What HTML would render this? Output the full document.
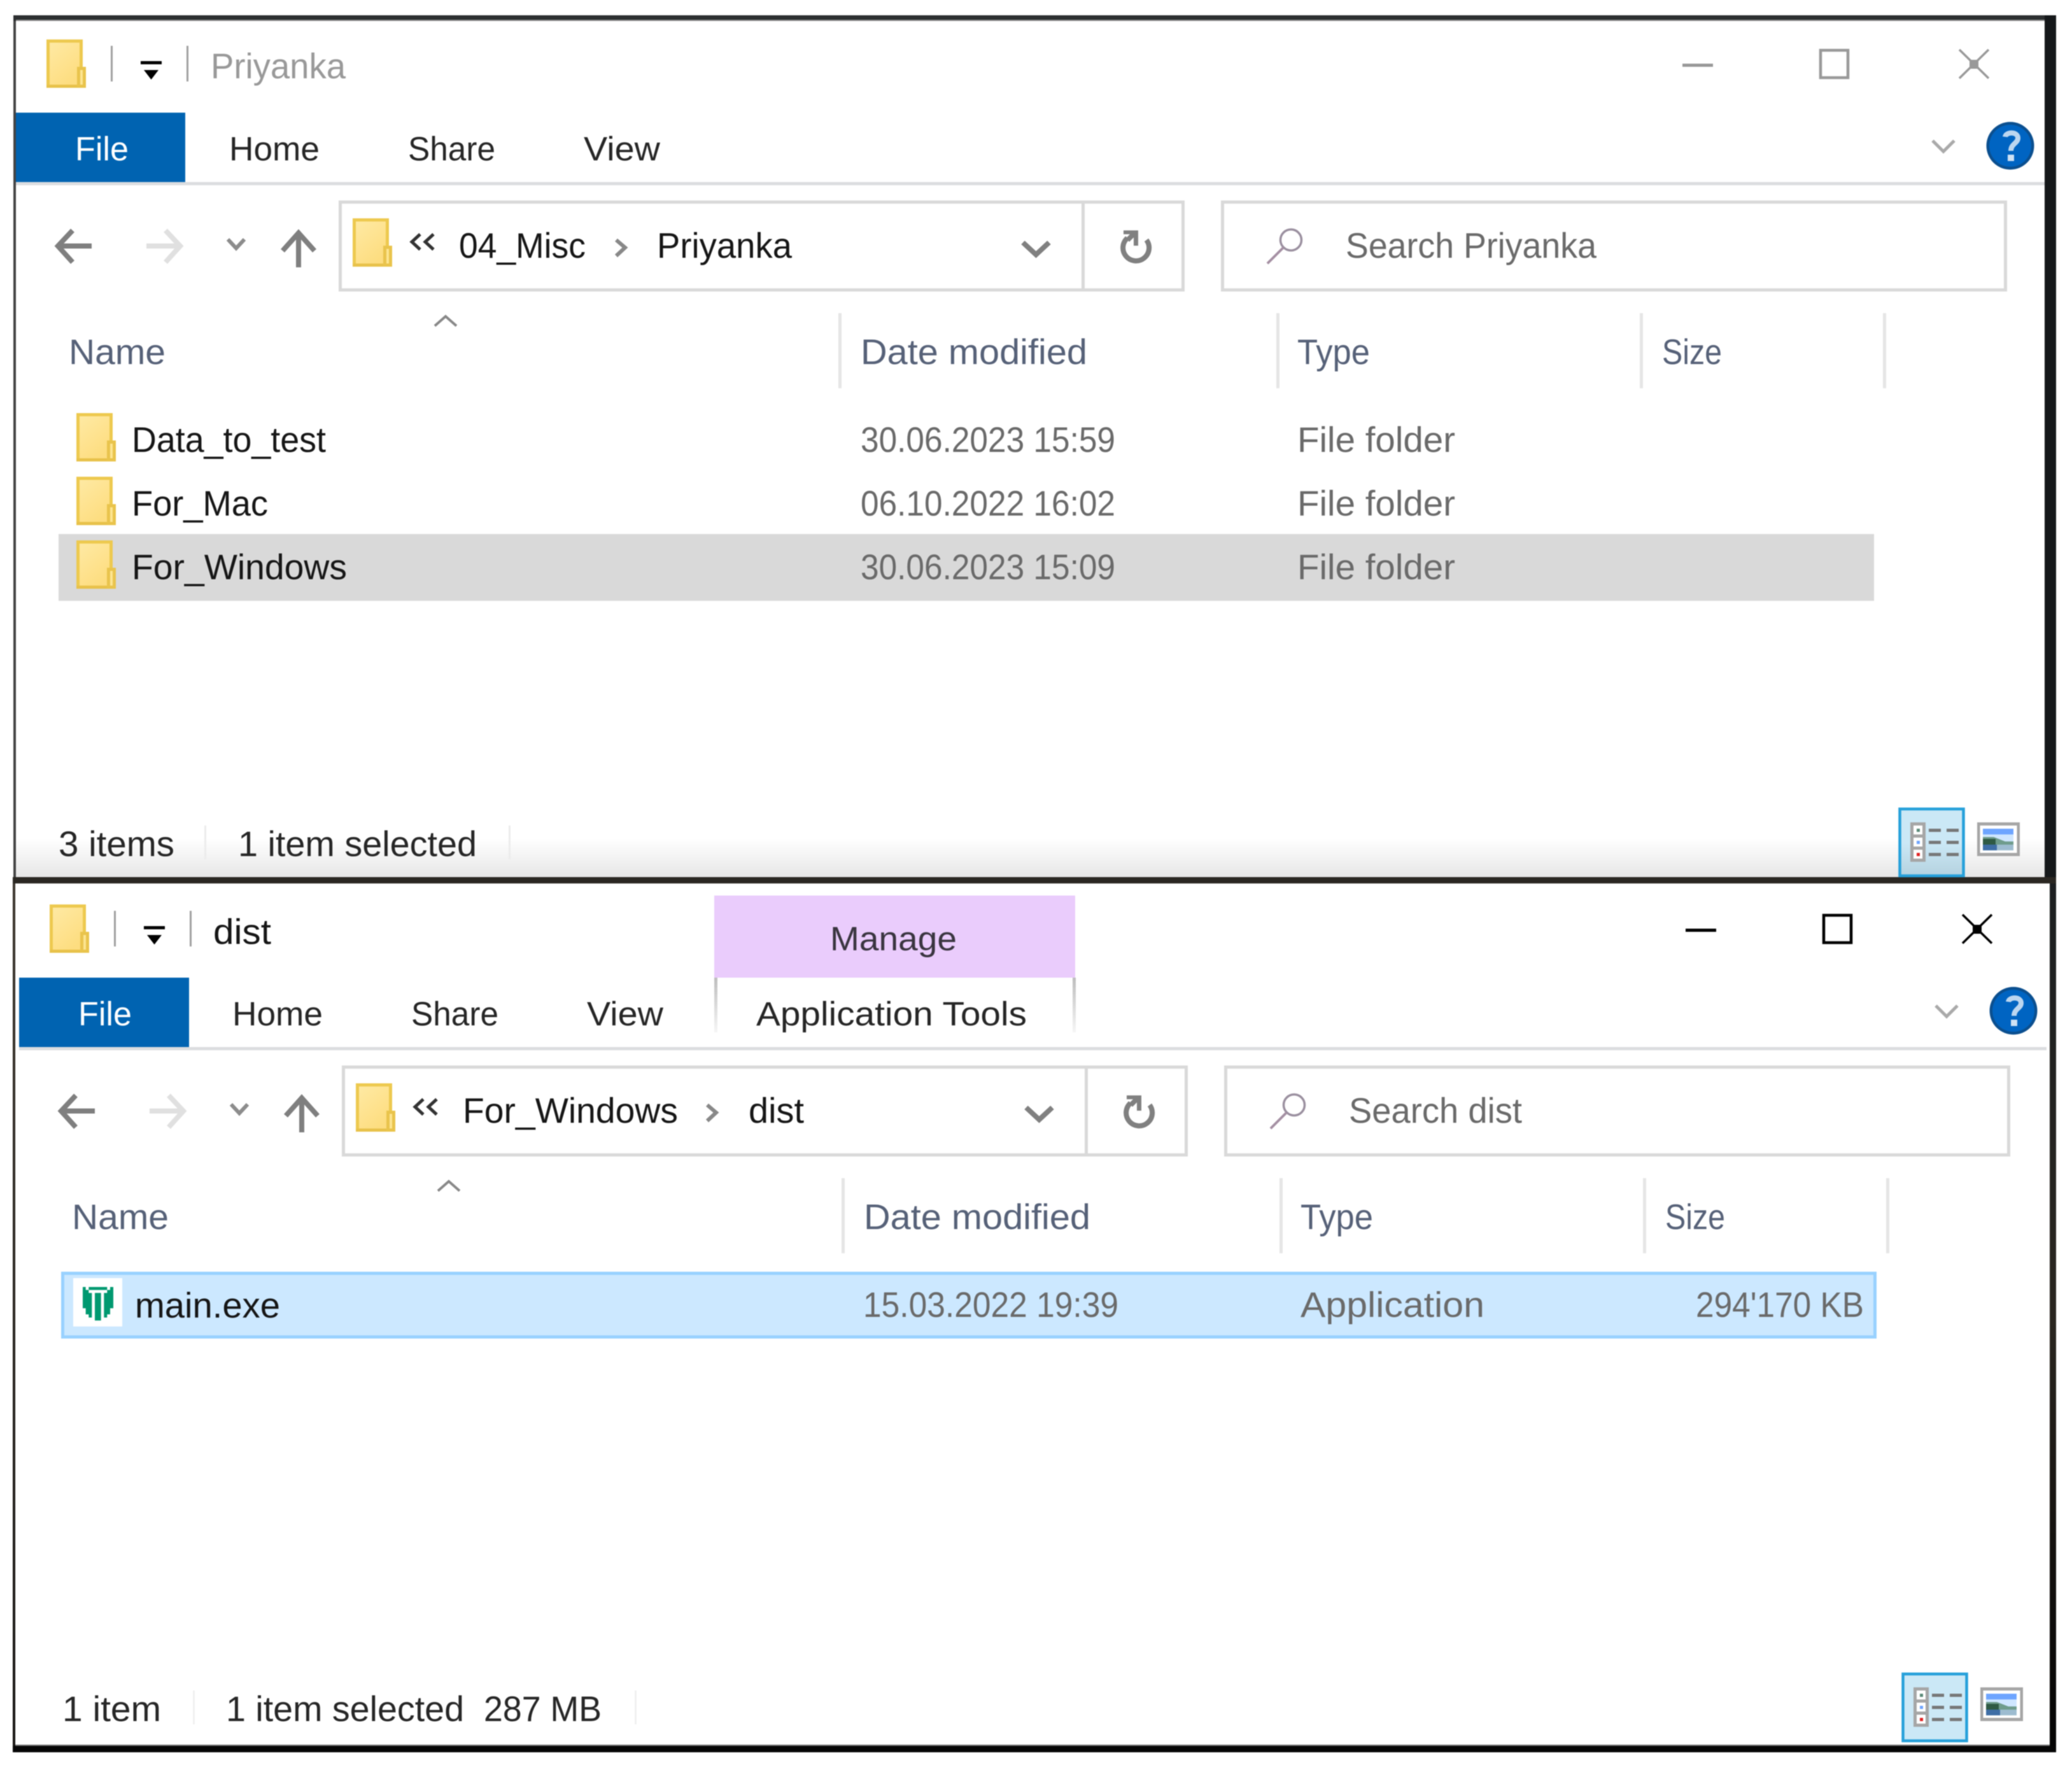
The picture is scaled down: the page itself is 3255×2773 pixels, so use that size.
<!DOCTYPE html>
<html><head><meta charset="utf-8"><title>Explorer</title>
<style>
html,body{margin:0;padding:0;background:#fff}
svg{display:block;filter:blur(.7px)}
text{font-family:"Liberation Sans",sans-serif;font-size:56px;fill:#161616}
.r{font-size:53px;fill:#262626}
.g{fill:#6a6a6a}
.h{fill:#566178}
.s{fill:#262626}
.ln{fill:none;stroke-linejoin:miter}
</style></head><body>
<svg xmlns="http://www.w3.org/2000/svg" width="3255" height="2773" viewBox="0 0 3255 2773">
<defs>
<linearGradient id="fg" x1="0" y1="0" x2=".6" y2="1"><stop offset="0" stop-color="#fee9a3"/><stop offset="1" stop-color="#fddd80"/></linearGradient>
<linearGradient id="st" x1="0" y1="0" x2="0" y2="1"><stop offset="0" stop-color="#fff"/><stop offset="1" stop-color="#e6e6e6"/></linearGradient>
<linearGradient id="btn" x1="0" y1="0" x2="0" y2="1"><stop offset="0" stop-color="#cbe8f6"/><stop offset=".5" stop-color="#cbe8f6"/><stop offset="1" stop-color="#b5d2df"/></linearGradient>
<linearGradient id="sep" x1="0" y1="0" x2="0" y2="1"><stop offset="0" stop-color="#bdbdbd"/><stop offset="1" stop-color="#f6f6f6"/></linearGradient>
<linearGradient id="rb" x1="0" y1="0" x2="0" y2="1"><stop offset="0" stop-color="#1c1f21"/><stop offset=".5" stop-color="#2a2620"/><stop offset=".75" stop-color="#15120f"/><stop offset="1" stop-color="#040404"/></linearGradient>
<linearGradient id="lb" x1="0" y1="0" x2="0" y2="1"><stop offset="0" stop-color="#3a342c"/><stop offset="1" stop-color="#141210"/></linearGradient>
<g id="folder">
<path d="M0 0H57V43H62V76H0Z" fill="#edc94f"/>
<rect x="5" y="5" width="47" height="66" fill="url(#fg)"/>
<rect x="48" y="43" width="14" height="33" fill="#e9c44c"/>
<rect x="53" y="48" width="4" height="23" fill="#fde590"/>
<rect x="0" y="71" width="48" height="5" fill="#e8c24b"/>
</g>
<g id="nav">
<path class="ln" d="M144 386.500H94M114 362L91 386.500L114 412" stroke="#7f7f7f" stroke-width="8"/>
<path class="ln" d="M230 386.500H280M260 362L283 386.500L260 412" stroke="#e0e0e0" stroke-width="8"/>
<path class="ln" d="M358 376L371 390L384 376" stroke="#8c8c8c" stroke-width="6"/>
<path class="ln" d="M469 420V368M444 394L469 366L494 394" stroke="#7f7f7f" stroke-width="8"/>
<rect x="534.500" y="317.500" width="1324" height="138" fill="none" stroke="#d9d9d9" stroke-width="5"/>
<rect x="1699" y="315" width="5" height="143" fill="#d9d9d9"/>
<rect x="1920.500" y="317.500" width="1230" height="138" fill="none" stroke="#d9d9d9" stroke-width="5"/>
<use href="#folder" x="554" y="343"/>
<path class="ln" d="M660 368L647 380L660 392M681 368L668 380L681 392" stroke="#333" stroke-width="5"/>
<path class="ln" d="M1607 381L1627.500 400L1648 381" stroke="#808080" stroke-width="8"/>
<path class="ln" d="M1801 377A20.500 20.500 0 1 1 1771 374" stroke="#808080" stroke-width="8"/>
<path d="M1765 362H1788V386H1781V373L1774 380L1769 374L1775 368H1765Z" fill="#808080"/>
<circle cx="2028" cy="377" r="16.500" fill="none" stroke="#9a8f9f" stroke-width="3.500"/>
<path d="M2016 389L1991 414" stroke="#a58fa3" stroke-width="4"/>
<path class="ln" d="M683 512L700 497L717 512" stroke="#888" stroke-width="4"/>
<rect x="1317" y="492" width="5" height="118" fill="#e6e6e6"/>
<rect x="2005" y="492" width="5" height="118" fill="#e6e6e6"/>
<rect x="2576" y="492" width="5" height="118" fill="#e6e6e6"/>
<rect x="2958" y="492" width="5" height="118" fill="#e6e6e6"/>
<path class="ln" d="M3036 221L3053 238L3070 221" stroke="#aaa" stroke-width="5"/>
<circle cx="3158" cy="229" r="37.500" fill="#0b4f8f"/>
<circle cx="3158" cy="229" r="33" fill="#0064c2"/>
<path class="ln" d="M3150 215C3151 207 3170 206 3170 217C3170 225 3159 226 3159 237" stroke="#bcd6f0" stroke-width="8"/>
<rect x="3154" y="243" width="10" height="10" fill="#cfe2f5"/>
</g>
<g id="views">
<rect x="2984.500" y="1271" width="100" height="105" fill="url(#btn)" stroke="#26a0da" stroke-width="4.500"/>
<rect x="3001" y="1292" width="24" height="62" fill="#a6a6a6"/>
<rect x="3006" y="1297" width="14" height="14" fill="#fff"/><rect x="3006" y="1316" width="14" height="14" fill="#fff"/><rect x="3006" y="1335" width="14" height="14" fill="#fff"/>
<rect x="3011" y="1302" width="5" height="5" fill="#5a8a78"/><rect x="3011" y="1321" width="5" height="5" fill="#6ea5ff"/><rect x="3011" y="1340" width="5" height="5" fill="#e02020"/>
<rect x="3030" y="1302" width="19" height="5" fill="#777"/><rect x="3058" y="1302" width="19" height="5" fill="#777"/>
<rect x="3030" y="1321" width="19" height="5" fill="#777"/><rect x="3058" y="1321" width="19" height="5" fill="#777"/>
<rect x="3030" y="1340" width="19" height="5" fill="#777"/><rect x="3058" y="1340" width="19" height="5" fill="#777"/>
<rect x="3106" y="1292" width="67" height="53" fill="#a6a6a6"/>
<rect x="3110.500" y="1297" width="58" height="43" fill="#fff"/>
<rect x="3115" y="1302" width="48" height="34" fill="#cfe6ff"/>
<rect x="3115" y="1302" width="48" height="9" fill="#6ea5ff"/>
<path d="M3115 1315H3132L3150 1322H3163V1329H3115Z" fill="#6f9c8c"/>
<rect x="3115" y="1318" width="20" height="9" fill="#2f5a44"/>
<path d="M3115 1327H3163V1336H3115Z" fill="#9dbcd0"/>
<rect x="3115" y="1327" width="22" height="9" fill="#3f6ea6"/>
</g>
</defs>

<!-- window frames -->
<rect x="21" y="24" width="4" height="1364" fill="#444"/>
<rect x="20" y="1388" width="4" height="1365" fill="url(#lb)"/>
<rect x="21" y="24" width="3209" height="9" fill="#2c2f30"/>
<rect x="25" y="31" width="3187" height="2" fill="#8d8d8d"/>
<rect x="3212" y="24" width="18" height="1364" fill="#15181a"/>
<rect x="3220" y="1388" width="10" height="1365" fill="url(#rb)"/>
<rect x="20" y="1378" width="3210" height="10" fill="#2a2722"/>
<rect x="20" y="2743" width="3210" height="10" fill="#060606"/>
<rect x="24" y="2741" width="3196" height="2" fill="#777"/>
<rect x="25" y="1317" width="3187" height="61" fill="url(#st)"/>

<!-- WINDOW 1 -->
<g>
<use href="#folder" x="73" y="62"/>
<rect x="174" y="72" width="3" height="56" fill="#a0a0a0"/>
<rect x="293" y="72" width="3" height="56" fill="#a0a0a0"/>
<rect x="221" y="96" width="33" height="5" fill="#000"/>
<path d="M226 110H249L237.500 125Z" fill="#000"/>
<text x="331" y="123" textLength="212" lengthAdjust="spacingAndGlyphs" style="fill:#999">Priyanka</text>
<rect x="2643" y="100" width="48" height="5" fill="#999"/>
<rect x="2860" y="79" width="43" height="43" fill="none" stroke="#999" stroke-width="4.500"/>
<path d="M3078 78L3124 123M3124 78L3078 123" stroke="#999" stroke-width="3.500"/>
<rect x="3094" y="94" width="14" height="14" fill="#999"/>
<rect x="25" y="177" width="266" height="109" fill="#0063b1"/>
<rect x="25" y="286" width="3187" height="5" fill="#dcdde0"/>
<text class="r" x="118" y="252" textLength="84" lengthAdjust="spacingAndGlyphs" style="fill:#fff">File</text>
<text class="r" x="360" y="252" textLength="142" lengthAdjust="spacingAndGlyphs">Home</text>
<text class="r" x="641" y="252" textLength="137" lengthAdjust="spacingAndGlyphs">Share</text>
<text class="r" x="917" y="252" textLength="120" lengthAdjust="spacingAndGlyphs">View</text>
<use href="#nav"/>
<text x="721" y="405" textLength="199" lengthAdjust="spacingAndGlyphs">04_Misc</text>
<path class="ln" d="M968 377L982 389L968 402" stroke="#888" stroke-width="6"/>
<text x="1032" y="405" textLength="212" lengthAdjust="spacingAndGlyphs">Priyanka</text>
<text class="g" x="2114" y="405" textLength="394" lengthAdjust="spacingAndGlyphs">Search Priyanka</text>
<text class="h" x="108" y="572" textLength="152" lengthAdjust="spacingAndGlyphs">Name</text>
<text class="h" x="1352" y="572" textLength="356" lengthAdjust="spacingAndGlyphs">Date modified</text>
<text class="h" x="2038" y="572" textLength="114" lengthAdjust="spacingAndGlyphs">Type</text>
<text class="h" x="2611" y="572" textLength="94" lengthAdjust="spacingAndGlyphs">Size</text>
<rect x="92" y="839" width="2852" height="105" fill="#d9d9d9"/>
<use href="#folder" x="120" y="649"/>
<use href="#folder" x="120" y="749"/>
<use href="#folder" x="120" y="849"/>
<text x="207" y="710" textLength="305" lengthAdjust="spacingAndGlyphs">Data_to_test</text>
<text x="207" y="810" textLength="214" lengthAdjust="spacingAndGlyphs">For_Mac</text>
<text x="207" y="910" textLength="338" lengthAdjust="spacingAndGlyphs">For_Windows</text>
<text class="g" x="1352" y="710" textLength="400" lengthAdjust="spacingAndGlyphs">30.06.2023 15:59</text>
<text class="g" x="1352" y="810" textLength="400" lengthAdjust="spacingAndGlyphs">06.10.2022 16:02</text>
<text class="g" x="1352" y="910" textLength="400" lengthAdjust="spacingAndGlyphs">30.06.2023 15:09</text>
<text class="g" x="2038" y="710" textLength="248" lengthAdjust="spacingAndGlyphs">File folder</text>
<text class="g" x="2038" y="810" textLength="248" lengthAdjust="spacingAndGlyphs">File folder</text>
<text class="g" x="2038" y="910" textLength="248" lengthAdjust="spacingAndGlyphs">File folder</text>
<text class="s" x="92" y="1345" textLength="182" lengthAdjust="spacingAndGlyphs">3 items</text>
<rect x="321" y="1297" width="3" height="53" fill="#ececec"/>
<text class="s" x="374" y="1345" textLength="375" lengthAdjust="spacingAndGlyphs">1 item selected</text>
<rect x="799" y="1297" width="3" height="53" fill="#ececec"/>
<use href="#views"/>
</g>

<!-- WINDOW 2 -->
<g transform="translate(5,1359)">
<use href="#folder" x="73" y="62"/>
<rect x="174" y="72" width="3" height="56" fill="#a0a0a0"/>
<rect x="293" y="72" width="3" height="56" fill="#a0a0a0"/>
<rect x="221" y="96" width="33" height="5" fill="#000"/>
<path d="M226 110H249L237.500 125Z" fill="#000"/>
<text x="330" y="124" textLength="91" lengthAdjust="spacingAndGlyphs">dist</text>
<rect x="1117" y="48" width="567" height="129" fill="#eaccfc"/>
<text x="1299" y="134" textLength="199" lengthAdjust="spacingAndGlyphs" style="font-size:53px;fill:#3a3540">Manage</text>
<rect x="1117" y="177" width="5" height="86" fill="url(#sep)"/>
<rect x="1680" y="177" width="5" height="86" fill="url(#sep)"/>
<rect x="2643" y="100" width="48" height="5" fill="#000"/>
<rect x="2860" y="79" width="43" height="43" fill="none" stroke="#000" stroke-width="4.500"/>
<path d="M3078 78L3124 123M3124 78L3078 123" stroke="#000" stroke-width="3.500"/>
<rect x="3094" y="94" width="14" height="14" fill="#000"/>
<rect x="25" y="177" width="267" height="109" fill="#0063b1"/>
<rect x="25" y="286" width="3185" height="5" fill="#dcdde0"/>
<text class="r" x="118" y="252" textLength="84" lengthAdjust="spacingAndGlyphs" style="fill:#fff">File</text>
<text class="r" x="360" y="252" textLength="142" lengthAdjust="spacingAndGlyphs">Home</text>
<text class="r" x="641" y="252" textLength="137" lengthAdjust="spacingAndGlyphs">Share</text>
<text class="r" x="917" y="252" textLength="120" lengthAdjust="spacingAndGlyphs">View</text>
<text class="r" x="1183" y="252" textLength="425" lengthAdjust="spacingAndGlyphs">Application Tools</text>
<use href="#nav"/>
<text x="722" y="405" textLength="338" lengthAdjust="spacingAndGlyphs">For_Windows</text>
<path class="ln" d="M1106 377L1120 389L1106 402" stroke="#888" stroke-width="6"/>
<text x="1171" y="405" textLength="87" lengthAdjust="spacingAndGlyphs">dist</text>
<text class="g" x="2114" y="405" textLength="272" lengthAdjust="spacingAndGlyphs">Search dist</text>
<text class="h" x="108" y="572" textLength="152" lengthAdjust="spacingAndGlyphs">Name</text>
<text class="h" x="1352" y="572" textLength="356" lengthAdjust="spacingAndGlyphs">Date modified</text>
<text class="h" x="2038" y="572" textLength="114" lengthAdjust="spacingAndGlyphs">Type</text>
<text class="h" x="2611" y="572" textLength="94" lengthAdjust="spacingAndGlyphs">Size</text>
<rect x="93.500" y="641.500" width="2847" height="100" fill="#cce8ff" stroke="#99d1ff" stroke-width="5"/>
<rect x="110" y="649" width="77" height="76" fill="#fff"/>
<g transform="translate(55,601) scale(.33333)" fill="#009970">
<path d="M210 186H224V200H238V214H253V330H238V315H224V286H210Z"/>
<path d="M354 186H339V200H325V214H310V330H325V315H339V286H354Z"/>
<rect x="238" y="186" width="87" height="14"/>
<rect x="267" y="214" width="29" height="130"/>
</g>
<text x="207" y="711" textLength="228" lengthAdjust="spacingAndGlyphs">main.exe</text>
<text class="g" x="1351" y="710" textLength="401" lengthAdjust="spacingAndGlyphs">15.03.2022 19:39</text>
<text class="g" x="2038" y="710" textLength="289" lengthAdjust="spacingAndGlyphs">Application</text>
<text class="g" x="2659" y="710" textLength="264" lengthAdjust="spacingAndGlyphs">294'170 KB</text>
<text class="s" x="93" y="1345" textLength="155" lengthAdjust="spacingAndGlyphs">1 item</text>
<rect x="298" y="1297" width="3" height="53" fill="#f0f0f0"/>
<text class="s" x="350" y="1345" textLength="374" lengthAdjust="spacingAndGlyphs">1 item selected</text>
<text class="s" x="755" y="1345" textLength="185" lengthAdjust="spacingAndGlyphs">287 MB</text>
<rect x="992" y="1297" width="3" height="53" fill="#f0f0f0"/>
<rect x="2984.500" y="1271" width="100" height="105" fill="#cbe8f6" stroke="#26a0da" stroke-width="4.500"/>
<g>
<rect x="3001" y="1292" width="24" height="62" fill="#a6a6a6"/>
<rect x="3006" y="1297" width="14" height="14" fill="#fff"/><rect x="3006" y="1316" width="14" height="14" fill="#fff"/><rect x="3006" y="1335" width="14" height="14" fill="#fff"/>
<rect x="3011" y="1302" width="5" height="5" fill="#5a8a78"/><rect x="3011" y="1321" width="5" height="5" fill="#6ea5ff"/><rect x="3011" y="1340" width="5" height="5" fill="#e02020"/>
<rect x="3030" y="1302" width="19" height="5" fill="#777"/><rect x="3058" y="1302" width="19" height="5" fill="#777"/>
<rect x="3030" y="1321" width="19" height="5" fill="#777"/><rect x="3058" y="1321" width="19" height="5" fill="#777"/>
<rect x="3030" y="1340" width="19" height="5" fill="#777"/><rect x="3058" y="1340" width="19" height="5" fill="#777"/>
<rect x="3106" y="1292" width="67" height="53" fill="#a6a6a6"/>
<rect x="3110.500" y="1297" width="58" height="43" fill="#fff"/>
<rect x="3115" y="1302" width="48" height="34" fill="#cfe6ff"/>
<rect x="3115" y="1302" width="48" height="9" fill="#6ea5ff"/>
<path d="M3115 1315H3132L3150 1322H3163V1329H3115Z" fill="#6f9c8c"/>
<rect x="3115" y="1318" width="20" height="9" fill="#2f5a44"/>
<path d="M3115 1327H3163V1336H3115Z" fill="#9dbcd0"/>
<rect x="3115" y="1327" width="22" height="9" fill="#3f6ea6"/>
</g>
</g>
</svg>
</body></html>
